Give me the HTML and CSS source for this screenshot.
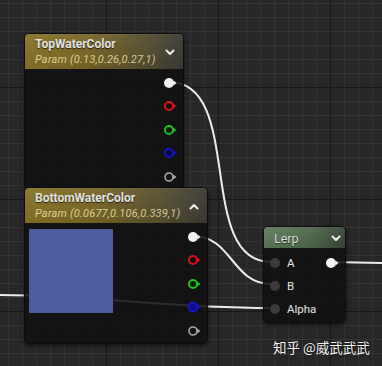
FILE: index.html
```html
<!DOCTYPE html>
<html>
<head>
<meta charset="utf-8">
<link rel="stylesheet" href="styles.css">
</head>
<body>
<div class="graph">
  <svg class="wires" width="382" height="366" viewBox="0 0 382 366">
    <path d="M169 82 C 245 82, 195 262, 271 262" />
    <path d="M193 236 C 232 236, 232 284, 271 284" />
    <path d="M-10 295 C 100 295, 160 308, 271 308" />
    <path d="M331 262 C 355 262, 360 263, 390 263" />
  </svg>

  <div class="node node--top">
    <div class="header header--param">
      <div class="titles">
        <div class="title">TopWaterColor</div>
        <div class="subtitle">Param (0.13,0.26,0.27,1)</div>
      </div>
      <svg class="chev" width="10" height="7" viewBox="0 0 10 7"><polyline points="1.5,1.5 5,5 8.5,1.5"/></svg>
    </div>
    <div class="body body--param">
      <div class="spacer"></div>
      <div class="pins">
        <div class="pin-row"><svg class="pin" width="14" height="12" viewBox="0 0 14 12"><circle cx="6" cy="6" r="5" fill="#f2f2f2"/><polygon points="10.5,3.5 13.5,6 10.5,8.5" fill="#f2f2f2"/></svg></div>
        <div class="pin-row"><svg class="pin" width="14" height="12" viewBox="0 0 14 12"><circle cx="6" cy="6" r="4" fill="#1a0808" stroke="#d0161e" stroke-width="2"/><polygon points="10,3.5 13.5,6 10,8.5" fill="#d0161e"/></svg></div>
        <div class="pin-row"><svg class="pin" width="14" height="12" viewBox="0 0 14 12"><circle cx="6" cy="6" r="4" fill="#081a08" stroke="#1ec21e" stroke-width="2"/><polygon points="10,3.5 13.5,6 10,8.5" fill="#1ec21e"/></svg></div>
        <div class="pin-row"><svg class="pin" width="14" height="12" viewBox="0 0 14 12"><circle cx="6" cy="6" r="4" fill="#0a0a30" stroke="#1616c8" stroke-width="2"/><polygon points="10,3.5 13.5,6 10,8.5" fill="#1616c8"/></svg></div>
        <div class="pin-row"><svg class="pin" width="14" height="12" viewBox="0 0 14 12"><circle cx="6" cy="6" r="4" fill="#141414" stroke="#a8a8a8" stroke-width="1.6"/><polygon points="10,3.5 13.5,6 10,8.5" fill="#a8a8a8"/></svg></div>
      </div>
    </div>
  </div>

  <div class="node node--bottom">
    <div class="header header--param">
      <div class="titles">
        <div class="title">BottomWaterColor</div>
        <div class="subtitle">Param (0.0677,0.106,0.339,1)</div>
      </div>
      <svg class="chev" width="10" height="7" viewBox="0 0 10 7"><polyline points="1.5,5.5 5,2 8.5,5.5"/></svg>
    </div>
    <div class="body body--param">
      <div class="swatch"></div>
      <div class="pins">
        <div class="pin-row"><svg class="pin" width="14" height="12" viewBox="0 0 14 12"><circle cx="6" cy="6" r="5" fill="#f2f2f2"/><polygon points="10.5,3.5 13.5,6 10.5,8.5" fill="#f2f2f2"/></svg></div>
        <div class="pin-row"><svg class="pin" width="14" height="12" viewBox="0 0 14 12"><circle cx="6" cy="6" r="4" fill="#1a0808" stroke="#d0161e" stroke-width="2"/><polygon points="10,3.5 13.5,6 10,8.5" fill="#d0161e"/></svg></div>
        <div class="pin-row"><svg class="pin" width="14" height="12" viewBox="0 0 14 12"><circle cx="6" cy="6" r="4" fill="#081a08" stroke="#1ec21e" stroke-width="2"/><polygon points="10,3.5 13.5,6 10,8.5" fill="#1ec21e"/></svg></div>
        <div class="pin-row"><svg class="pin" width="14" height="12" viewBox="0 0 14 12"><circle cx="6" cy="6" r="4.5" fill="#10108a" stroke="#1616c8" stroke-width="2"/><polygon points="10,3.5 13.5,6 10,8.5" fill="#1616c8"/></svg></div>
        <div class="pin-row"><svg class="pin" width="14" height="12" viewBox="0 0 14 12"><circle cx="6" cy="6" r="4" fill="#141414" stroke="#a8a8a8" stroke-width="1.6"/><polygon points="10,3.5 13.5,6 10,8.5" fill="#a8a8a8"/></svg></div>
      </div>
    </div>
  </div>

  <div class="node node--lerp">
    <div class="header header--lerp">
      <div class="lerp-title">Lerp</div>
      <svg class="chev" width="10" height="7" viewBox="0 0 10 7"><polyline points="1.5,1.5 5,5 8.5,1.5"/></svg>
    </div>
    <div class="body body--lerp">
      <div class="in-row">
        <span class="in-dot"></span><span class="in-label">A</span>
        <svg class="pin out-pin" width="14" height="12" viewBox="0 0 14 12"><circle cx="6" cy="6" r="5" fill="#f2f2f2"/><polygon points="10.5,3.5 13.5,6 10.5,8.5" fill="#f2f2f2"/></svg>
      </div>
      <div class="in-row"><span class="in-dot"></span><span class="in-label">B</span></div>
      <div class="in-row"><span class="in-dot"></span><span class="in-label">Alpha</span></div>
    </div>
  </div>

  <div class="watermark">知乎 @威武武武</div>
</div>
</body>
</html>
```

FILE: styles.css
```css
* { box-sizing: border-box; }

html, body {
  margin: 0;
  padding: 0;
  background: #272727;
}

.graph {
  position: relative;
  width: 382px;
  height: 366px;
  overflow: hidden;
  font-family: Roboto, "Noto Sans", sans-serif;
  background-color: #272727;
  background-image:
    linear-gradient(to right, #171717 1px, transparent 1px),
    linear-gradient(to bottom, #171717 1px, transparent 1px),
    linear-gradient(to right, #333333 1px, transparent 1px),
    linear-gradient(to bottom, #333333 1px, transparent 1px);
  background-size: 112px 100%, 100% 112px, 14px 100%, 100% 14px;
  background-position: 106px 0, 0 87px, 8px 0, 0 3px;
}

.wires {
  position: absolute;
  left: 0;
  top: 0;
}

.wires path {
  fill: none;
  stroke: #ececec;
  stroke-width: 2;
}

.node {
  position: absolute;
  border-radius: 5px;
  border: 1px solid #0c0c0c;
  box-shadow: 0 2px 4px rgba(0, 0, 0, 0.55);
  overflow: hidden;
}

.node--top { left: 24px; top: 33px; width: 160px; }
.node--bottom { left: 24px; top: 187px; width: 184px; }
.node--lerp { left: 263px; top: 226px; width: 83px; }

.header {
  display: flex;
  align-items: center;
  justify-content: space-between;
  border-top: 1px solid rgba(255, 255, 255, 0.12);
}

.header--param {
  height: 35px;
  padding: 0 8px 0 10px;
  background:
    linear-gradient(to bottom, rgba(255, 255, 255, 0.04), rgba(0, 0, 0, 0.08)),
    linear-gradient(to right, #8a7427 0%, #7a6626 40%, #58502e 75%, #3c3b36 100%);
}

.header--lerp {
  height: 21px;
  padding: 0 4px 0 10px;
  background:
    linear-gradient(to bottom, rgba(255, 255, 255, 0.05), rgba(0, 0, 0, 0.08)),
    linear-gradient(to right, #5e7c59 0%, #4f6a4b 55%, #3a463b 100%);
}

.titles {
  display: flex;
  flex-direction: column;
  padding-top: 1px;
}

.title {
  font-size: 12px;
  font-weight: 700;
  color: #e2e2e2;
  line-height: 15px;
  text-shadow: 0 1px 1px rgba(0, 0, 0, 0.7);
}

.subtitle {
  font-size: 11px;
  font-style: italic;
  letter-spacing: 0.2px;
  color: rgba(244, 232, 184, 0.8);
  line-height: 16px;
}

.lerp-title {
  font-size: 12.5px;
  color: #dcdcdc;
  text-shadow: 0 1px 1px rgba(0, 0, 0, 0.6);
}

.chev polyline {
  fill: none;
  stroke: #f0f0f0;
  stroke-width: 2;
  stroke-linecap: round;
  stroke-linejoin: round;
}

.body {
  background: rgba(17, 17, 17, 0.88);
}

.body--param {
  height: 120px;
  display: flex;
  justify-content: space-between;
  align-items: flex-start;
}

.swatch {
  width: 84px;
  height: 84px;
  margin: 6px 0 0 4px;
  background: #4d5e9e;
}

.pins {
  display: flex;
  flex-direction: column;
  padding: 2px 6px 0 0;
}

.pin-row {
  height: 23.5px;
  display: flex;
  align-items: center;
}

.pin { display: block; }

.body--lerp {
  height: 74px;
  padding-top: 3.5px;
}

.in-row {
  height: 23px;
  display: flex;
  align-items: center;
  padding-left: 6px;
}

.in-dot {
  width: 10px;
  height: 10px;
  border-radius: 50%;
  background: #3b3b3b;
}

.in-label {
  margin-left: 7px;
  font-size: 11.5px;
  color: #e6e6e6;
}

.out-pin {
  margin-left: auto;
  margin-right: 6px;
}

.watermark {
  position: absolute;
  left: 273px;
  top: 337px;
  font-family: "Noto Sans CJK SC", "Noto Sans", sans-serif;
  font-size: 13.5px;
  color: #f4f4f4;
  text-shadow: 0 0 2px rgba(0, 0, 0, 0.8);
  white-space: nowrap;
}
```
